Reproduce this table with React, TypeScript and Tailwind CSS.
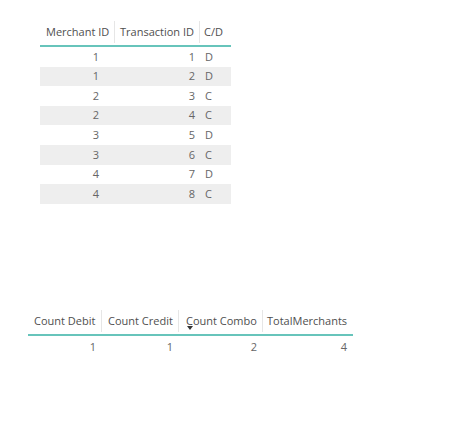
const rows = [
  [1, 1, "D"],
  [1, 2, "D"],
  [2, 3, "C"],
  [2, 4, "C"],
  [3, 5, "D"],
  [3, 6, "C"],
  [4, 7, "D"],
  [4, 8, "C"],
];

export default function App() {
  return (
    <div
      className="w-[474px] h-[434px] bg-white text-[11px] text-[#666666] overflow-hidden"
      style={{ fontFamily: '"Open Sans", "Noto Sans", sans-serif' }}
    >
      <div className="ml-[40px] mt-[19px] w-[191px]">
        <div className="grid grid-cols-[75px_85px_31px] h-[28px] border-b-2 border-[#67c4bb] text-[#4f4f4f]">
          <div className="flex items-center pl-[6px] border-r border-[#e6e6e6] my-[2px]">Merchant ID</div>
          <div className="flex items-center pl-[5px] border-r border-[#e6e6e6] my-[2px]">Transaction ID</div>
          <div className="flex items-center pl-[4px]">C/D</div>
        </div>
        {rows.map((r, i) => (
          <div
            key={i}
            className={`grid grid-cols-[75px_85px_31px] h-[19.6px] items-center ${i % 2 === 1 ? "bg-[#eeeeee]" : "bg-white"}`}
          >
            <div className="text-right pr-[16px]">{r[0]}</div>
            <div className="text-right pr-[5px]">{r[1]}</div>
            <div className="pl-[5px]">{r[2]}</div>
          </div>
        ))}
      </div>

      <div className="ml-[28px] mt-[104px] w-[325px]">
        <div className="grid grid-cols-[74px_77px_84px_90px] h-[28px] border-b-2 border-[#67c4bb] text-[#4f4f4f]">
          <div className="flex items-center pl-[6px] border-r border-[#e6e6e6] my-[2px]">Count Debit</div>
          <div className="flex items-center pl-[6px] border-r border-[#e6e6e6] my-[2px]">Count Credit</div>
          <div className="relative flex items-center pl-[7px] border-r border-[#e6e6e6] my-[2px]">
            Count Combo
            <span className="absolute left-[8px] bottom-[2px] w-0 h-0 border-l-[3px] border-r-[3px] border-t-[4px] border-l-transparent border-r-transparent border-t-[#333]" />
          </div>
          <div className="flex items-center pl-[4px]">TotalMerchants</div>
        </div>
        <div className="grid grid-cols-[74px_77px_84px_90px] h-[22px] items-center">
          <div className="text-right pr-[6px]">1</div>
          <div className="text-right pr-[6px]">1</div>
          <div className="text-right pr-[6px]">2</div>
          <div className="text-right pr-[6px]">4</div>
        </div>
      </div>
    </div>
  );
}
